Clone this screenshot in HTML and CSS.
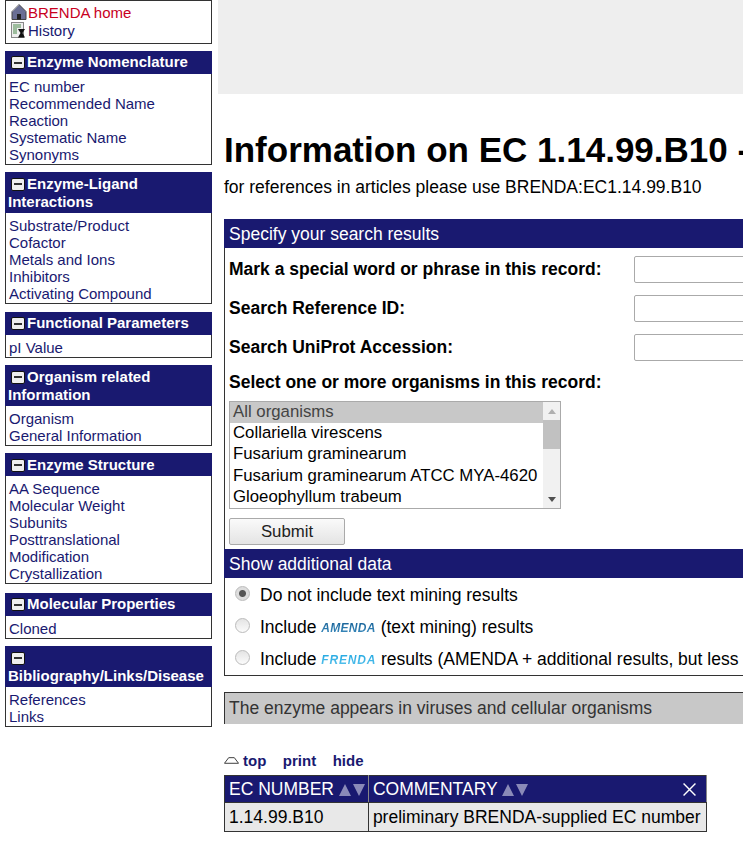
FILE: index.html
```html
<!doctype html>
<html>
    <head>
        <title>BRENDA - Information on EC 1.14.99.B10</title>
        <meta name="viewport" content="width=device-width, initial-scale=1">
        <link rel="stylesheet" href="styles.css">
    </head>
    <body>
        <nav class="sidebar">
            <section class="home-box">
                <a class="home-link red">
                    <svg class="home-icon" viewBox="0 0 16 16"><path d="M8 .5 1 7.5V15.5H15V7.5Z" fill="#6a6f94" stroke="#444"/><path d="M6 15.5V10H10V15.5Z" fill="#222"/><path d="M8 .5 1 7.5" stroke="#ccc" fill="none"/></svg>
                    BRENDA home
                </a>
                <a class="home-link">
                    <svg class="home-icon" viewBox="0 0 16 16"><rect x=".5" y=".5" width="12" height="15" fill="#eee" stroke="#888"/><path d="M2 3H10M2 5H10M2 7H6M2 9H6M2 11H6" stroke="#4a8a4a"/><path d="M7 7H14L11.5 11 14 15.5H7L9.5 11Z" fill="#111"/></svg>
                    History
                </a>
            </section>

            <section class="menu">
                <h2><span class="minus"></span>Enzyme Nomenclature</h2>
                <ul>
                    <li>EC number</li>
                    <li>Recommended Name</li>
                    <li>Reaction</li>
                    <li>Systematic Name</li>
                    <li>Synonyms</li>
                </ul>
            </section>

            <section class="menu">
                <h2><span class="minus"></span>Enzyme-Ligand Interactions</h2>
                <ul>
                    <li>Substrate/Product</li>
                    <li>Cofactor</li>
                    <li>Metals and Ions</li>
                    <li>Inhibitors</li>
                    <li>Activating Compound</li>
                </ul>
            </section>

            <section class="menu">
                <h2><span class="minus"></span>Functional Parameters</h2>
                <ul>
                    <li>pI Value</li>
                </ul>
            </section>

            <section class="menu">
                <h2><span class="minus"></span>Organism related Information</h2>
                <ul>
                    <li>Organism</li>
                    <li>General Information</li>
                </ul>
            </section>

            <section class="menu structure">
                <h2><span class="minus"></span>Enzyme Structure</h2>
                <ul>
                    <li>AA Sequence</li>
                    <li>Molecular Weight</li>
                    <li>Subunits</li>
                    <li>Posttranslational Modification</li>
                    <li>Crystallization</li>
                </ul>
            </section>

            <section class="menu">
                <h2><span class="minus"></span>Molecular Properties</h2>
                <ul>
                    <li>Cloned</li>
                </ul>
            </section>

            <section class="menu">
                <h2><span class="minus"></span>Bibliography/Links/Disease</h2>
                <ul>
                    <li>References</li>
                    <li>Links</li>
                </ul>
            </section>
        </nav>

        <main class="main">
            <div class="banner"></div>

            <div class="content">
                <h1>Information on EC 1.14.99.B10 -</h1>
                <p class="cite">for references in articles please use BRENDA:EC1.14.99.B10</p>

                <section class="panel">
                    <h3>Specify your search results</h3>
                    <div class="panel-body">
                        <label class="search-row">
                            <span>Mark a special word or phrase in this record:</span>
                            <input type="text">
                        </label>
                        <label class="search-row">
                            <span>Search Reference ID:</span>
                            <input type="text">
                        </label>
                        <label class="search-row">
                            <span>Search UniProt Accession:</span>
                            <input type="text">
                        </label>
                        <div class="select-title">Select one or more organisms in this record:</div>
                        <div class="listbox">
                            <ul>
                                <li class="selected">All organisms</li>
                                <li>Collariella virescens</li>
                                <li>Fusarium graminearum</li>
                                <li>Fusarium graminearum ATCC MYA-4620</li>
                                <li>Gloeophyllum trabeum</li>
                            </ul>
                            <div class="scrollbar">
                                <span class="arrow up"></span>
                                <span class="thumb"></span>
                                <span class="arrow down"></span>
                            </div>
                        </div>
                        <button class="submit">Submit</button>
                    </div>
                    <h3>Show additional data</h3>
                    <div class="panel-body radios">
                        <div class="radio-row"><span class="radio checked"></span>Do not include text mining results</div>
                        <div class="radio-row"><span class="radio"></span>Include <b class="logo amenda">AMENDA</b> (text mining) results</div>
                        <div class="radio-row"><span class="radio"></span>Include <b class="logo frenda">FRENDA</b> results (AMENDA + additional results, but less</div>
                    </div>
                </section>

                <div class="note">The enzyme appears in viruses and cellular organisms</div>

                <div class="tools">
                    <svg class="top-icon" viewBox="0 0 16 8"><path d="M.5 7.5 5 1.5H11L15.5 7.5Z" fill="none" stroke="#333"/></svg>
                    <a>top</a><a>print</a><a>hide</a>
                </div>

                <table class="results">
                    <thead>
                        <tr>
                            <th class="ec-col">
                                EC NUMBER
                                <svg class="sort" viewBox="0 0 26 12"><path d="M0 12 6 0 12 12ZM14 0H26L20 12Z" fill="#8a8ab8"/></svg>
                            </th>
                            <th>
                                <div class="th-inner">
                                    <span>
                                        COMMENTARY
                                        <svg class="sort" viewBox="0 0 26 12"><path d="M0 12 6 0 12 12ZM14 0H26L20 12Z" fill="#8a8ab8"/></svg>
                                    </span>
                                    <svg class="close" viewBox="0 0 12 12"><path d="M.5 .5 11.5 11.5M11.5 .5 .5 11.5" stroke="#fff" stroke-width="1.3"/></svg>
                                </div>
                            </th>
                        </tr>
                    </thead>
                    <tbody>
                        <tr>
                            <td class="ec-col">1.14.99.B10</td>
                            <td>preliminary BRENDA-supplied EC number</td>
                        </tr>
                    </tbody>
                </table>
            </div>
        </main>
    </body>
</html>
```
FILE: styles.css
```css
html, body {
    margin: 0;
    height: 100%;
    overflow: hidden;
    background: #fff;
    font-family: "Liberation Sans", Arial, sans-serif;
    font-size: 17.5px;
    color: #000;
}

body {
    display: flex;
    align-items: flex-start;
}

/* left menu */

.sidebar {
    flex: 0 0 207px;
    margin-left: 5px;
    display: flex;
    flex-direction: column;
    gap: 7.4px;
    font-size: 15px;
    line-height: 17px;
    color: #191970;
}

.home-box {
    height: 43.6px;
    box-sizing: border-box;
    border: 1px solid #333;
    padding: 2px 5px 0;
}

.home-link {
    display: flex;
    align-items: center;
    height: 18px;
    gap: 1px;
}

.home-link.red {
    color: #c8001e;
}

.home-icon {
    width: 16px;
    height: 16px;
    flex: none;
}

.menu {
    border: 1px solid #333;
    border-top: none;
}

.menu.structure {
    margin-bottom: 1px;
}

.menu h2 {
    margin: 0 -1px;
    padding: 2.4px 3px 2.6px;
    background: #191970;
    color: #fff;
    font-size: 15px;
    line-height: 18px;
    font-weight: bold;
}

.minus {
    display: inline-block;
    box-sizing: border-box;
    width: 14px;
    height: 13px;
    margin: 0 2px 0 3px;
    vertical-align: -2px;
    background: linear-gradient(#333, #333) center / 8px 2px no-repeat #eee;
    border: 1px solid #111;
    border-radius: 2px;
}

.menu ul {
    margin: 0;
    padding: 4px 12px 1px 3px;
    list-style: none;
}

/* main column */

.main {
    flex: 1;
    min-width: 0;
    margin-left: 6px;
    overflow: hidden;
}

.banner {
    height: 94px;
    background: #eeeeee;
}

.content {
    width: 1000px;
    margin-left: 6px;
}

h1 {
    margin: 37px 0 0;
    font-size: 35px;
    line-height: 38px;
    font-weight: bold;
    white-space: nowrap;
}

.cite {
    margin: 8px 0 0;
    line-height: 20px;
}

.panel {
    margin-top: 22px;
    border: 1px solid #333;
    border-top: none;
}

.panel h3 {
    margin: 0 -1px;
    height: 29px;
    padding-left: 5px;
    background: #191970;
    color: #fff;
    font-size: 17.5px;
    font-weight: normal;
    line-height: 30px;
}

.panel-body {
    padding: 0 4px;
}

.search-row {
    display: flex;
    align-items: center;
    height: 39px;
    font-weight: bold;
}

.search-row:first-child {
    margin-top: 2px;
}

.search-row span {
    flex: 0 0 405px;
}

.search-row input {
    box-sizing: border-box;
    width: 300px;
    height: 27px;
    border: 1px solid #aaa;
    border-radius: 2px;
    background: #fff;
}

.select-title {
    margin-top: 5px;
    font-weight: bold;
    line-height: 20px;
}

.listbox {
    display: flex;
    box-sizing: border-box;
    width: 332px;
    height: 108px;
    margin-top: 9px;
    border: 1px solid #aaa;
    font-size: 16.8px;
}

.listbox ul {
    flex: 1;
    min-width: 0;
    margin: 0;
    padding: 0;
    list-style: none;
    line-height: 20px;
    white-space: nowrap;
}

.listbox li {
    padding: 0 0 1.2px 3px;
}

.listbox li.selected {
    background: #c8c8c8;
    color: #444;
}

.scrollbar {
    flex: 0 0 17px;
    display: flex;
    flex-direction: column;
    align-items: center;
    background: #f1f1f1;
}

.thumb {
    align-self: stretch;
    height: 29px;
    background: #c1c1c1;
}

.arrow {
    width: 0;
    height: 0;
    border-left: 4.5px solid transparent;
    border-right: 4.5px solid transparent;
}

.arrow.up {
    height: 0;
    margin: 7px 0 6px;
    border-bottom: 5px solid #b0b0b0;
}

.arrow.down {
    margin-top: auto;
    margin-bottom: 6px;
    border-top: 5px solid #505050;
}

.submit {
    display: block;
    box-sizing: border-box;
    width: 116px;
    height: 27px;
    margin: 9px 0 4px;
    padding: 0;
    border: 1px solid #aaa;
    border-radius: 2px;
    background: linear-gradient(#fafafa, #e4e4e4);
    font: inherit;
    font-size: 16.8px;
    color: #222;
}

.radios {
    padding: 1px 0 0 10px;
}

.radio-row {
    display: flex;
    align-items: center;
    height: 32.5px;
    white-space: pre;
}

.radio-row:last-child {
    height: 31px;
}

.radio {
    box-sizing: border-box;
    flex: none;
    width: 15px;
    height: 15px;
    margin: -4px 10px 0 0;
    border: 1px solid #bbb;
    border-radius: 50%;
    background: linear-gradient(#e4e4e4, #fbfbfb);
}

.radio.checked {
    background: radial-gradient(circle, #555 0 3px, #ddd 4px);
}

.logo {
    font-size: 12px;
    font-style: italic;
    letter-spacing: .3px;
    -webkit-background-clip: text;
    background-clip: text;
    color: transparent;
}

.logo.amenda {
    background-image: linear-gradient(#155f94, #3f8fc2);
}

.logo.frenda {
    letter-spacing: .8px;
    background-image: linear-gradient(#1fa6e0, #5cc4ee);
}

.note {
    box-sizing: border-box;
    height: 32px;
    margin-top: 16px;
    padding-left: 4px;
    background: #c8c8c8;
    border: 1px solid #333;
    border-width: 1px 0 0 1px;
    color: #333;
    line-height: 30px;
}

/* results table */

.tools {
    display: flex;
    align-items: center;
    height: 20px;
    margin-top: 26px;
    color: #191970;
    font-size: 15px;
    font-weight: bold;
}

.top-icon {
    width: 15px;
    height: 8px;
    margin-right: 4px;
}

.tools a {
    margin-right: 16.5px;
}

.results {
    margin-top: 5px;
    border-collapse: collapse;
    font-size: 17.5px;
}

.results th, .results td {
    padding: 0 5px 0 4px;
    border: 1px solid #333;
    text-align: left;
    white-space: nowrap;
}

.results .ec-col {
    padding-right: 3px;
}

.results th {
    height: 26px;
    background: #191970;
    color: #fff;
    font-weight: normal;
    border-right-color: #888;
}

.results td {
    height: 28px;
    background: #e8e8e8;
}

.th-inner {
    display: flex;
    align-items: center;
    justify-content: space-between;
}

.sort {
    width: 26px;
    height: 12px;
    vertical-align: -1px;
}

.close {
    width: 13px;
    height: 13px;
    margin-right: 5px;
}
```
